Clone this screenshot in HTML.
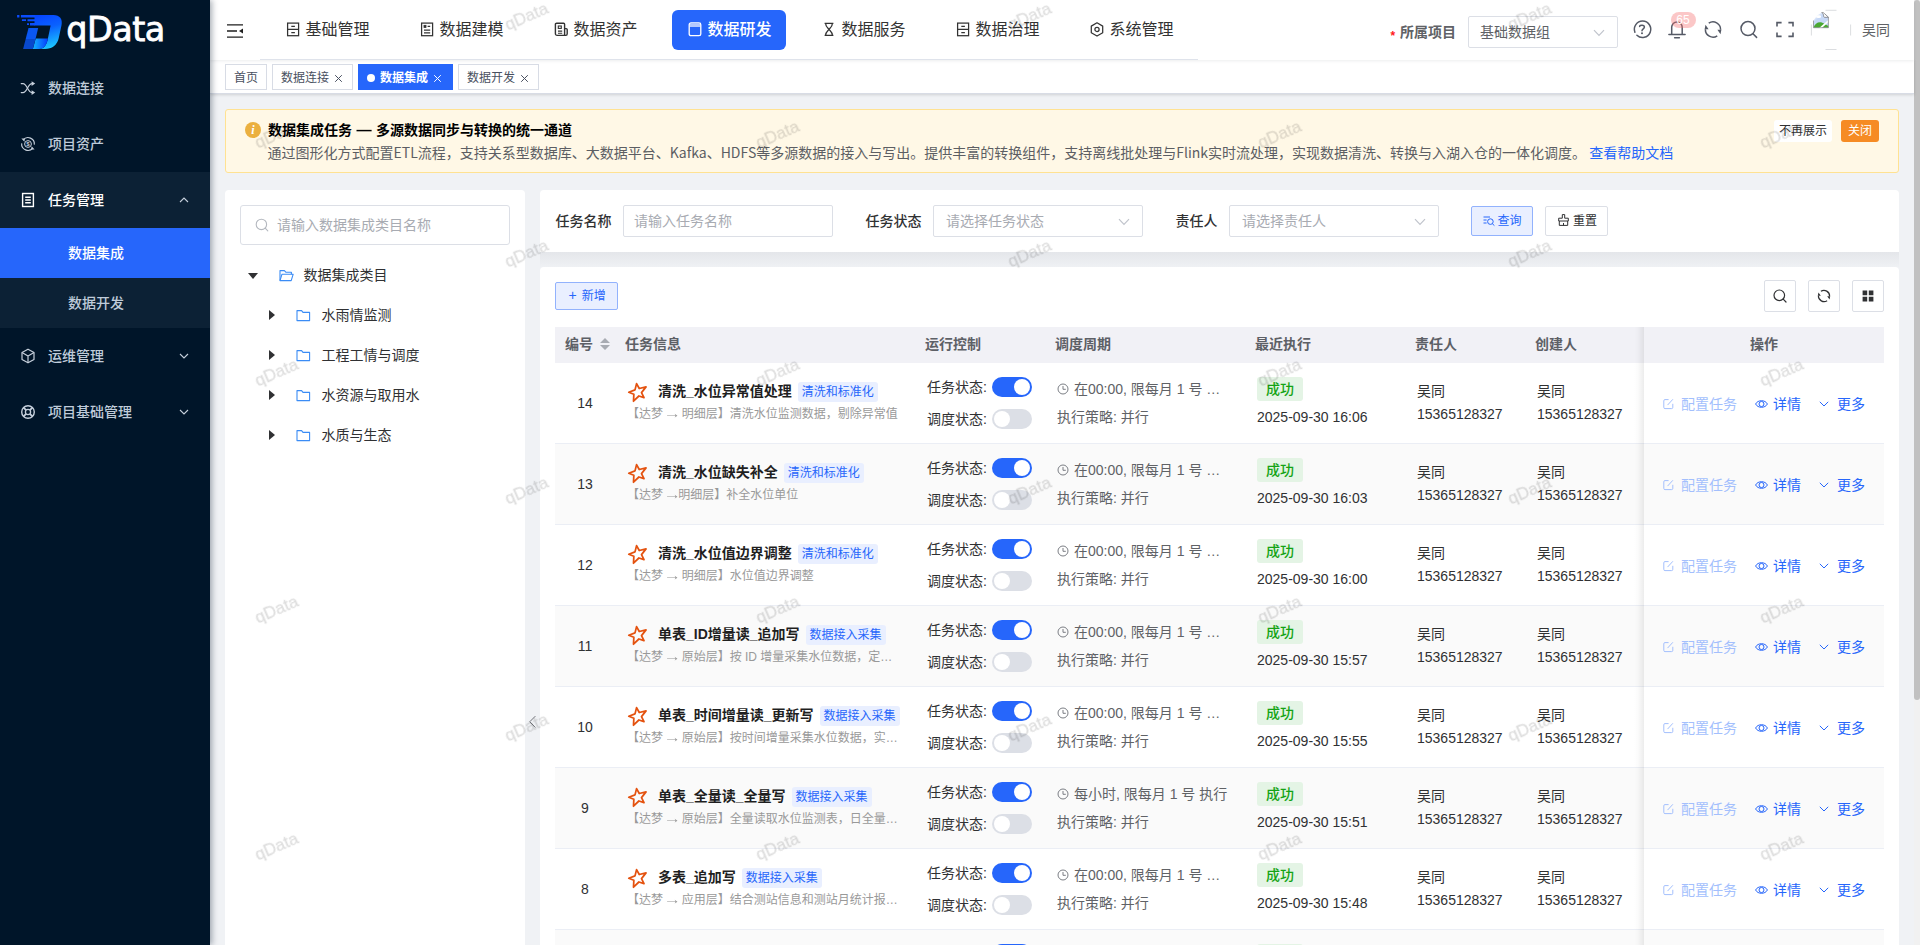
<!DOCTYPE html>
<html lang="zh-CN">
<head>
<meta charset="utf-8">
<title>qData 数据集成</title>
<style>
*{box-sizing:border-box;margin:0;padding:0}
html,body{width:1920px;height:945px;overflow:hidden}
body{font-family:"Liberation Sans","Noto Sans CJK SC",sans-serif;font-size:14px;color:#303133;background:#f0f2f5;position:relative}
svg{display:block;overflow:visible}
.a{position:absolute;white-space:nowrap}
b{font-weight:700}
#sbar{position:absolute;left:1914px;top:0;width:6px;height:945px;background:#f1f1f1}
#sbar i{position:absolute;left:0;top:0;width:6px;height:700px;background:#c1c1c1;border-radius:3px}
/* sidebar */
#side{position:absolute;left:0;top:0;width:210px;height:945px;background:#001529;box-shadow:2px 0 6px rgba(0,21,41,.35);z-index:5}
#logo .t{position:absolute;left:66.3px;top:7.6px;font-family:"DejaVu Sans","Liberation Sans",sans-serif;font-size:33.4px;line-height:44px;color:#fff;letter-spacing:-0.5px;-webkit-text-stroke:.8px #fff}
.mi{position:absolute;left:0;width:210px;height:56px;color:#bfcbd9;font-weight:500;font-size:14px;line-height:56px;padding-left:48px}
.mi svg{position:absolute}
.sub{position:absolute;left:0;width:210px;height:50px;line-height:50px;padding-left:68px;font-weight:500;color:#bfcbd9;background:#0c2135}
.sub.on{background:#2666fb;color:#fff}
/* header */
#top{position:absolute;left:210px;top:0;width:1704px;height:60px;background:#fff;box-shadow:0 1px 3px rgba(0,21,41,.08);z-index:2}
#top .line{position:absolute;left:50px;top:59px;width:938px;height:1px;background:#dfe3eb}
.nv{position:absolute;top:10px;height:40px;line-height:39px;font-size:16px;color:#333;white-space:nowrap}
.nv svg{position:absolute;top:12px}
.nv.on{background:#2666fb;color:#fff;border-radius:6px;width:114px;font-weight:500}
#tags{position:absolute;left:210px;top:60px;z-index:1;width:1704px;height:34px;background:#fff;border-bottom:1px solid #d8dce5;box-shadow:0 1px 3px 0 rgba(0,0,0,.12),0 0 3px 0 rgba(0,0,0,.04)}
.tg{position:absolute;top:4px;height:26px;line-height:27px;border:1px solid #d8dce5;background:#fff;color:#495060;font-size:12px;padding:0 8px;white-space:nowrap}
.tg.on{background:#2666fb;border-color:#2666fb;color:#fff;font-weight:700}
.tg .dot{display:inline-block;width:8px;height:8px;border-radius:50%;background:#fff;margin-right:5px;position:relative;top:0}
.tg svg{display:inline-block;margin-left:5px;vertical-align:-1px}
/* alert */
#alert{position:absolute;left:225px;top:109px;width:1674px;height:64px;background:#fff8e6;border:1px solid #ffe292;border-radius:3px}
/* panels */
.card{position:absolute;background:#fff;border-radius:4px}
.inp{position:absolute;height:32px;border:1px solid #dcdfe6;border-radius:2px;background:#fff;color:#a8abb2;font-size:14px;line-height:30px;padding-left:10px;white-space:nowrap}
.lbl{position:absolute;font-weight:500;color:#303133;font-size:14px;line-height:32px;top:205px;white-space:nowrap}
.btn{position:absolute;border:1px solid #dcdfe6;border-radius:2px;background:#fff;font-size:12px;white-space:nowrap}
.btn.pl{background:#e9efff;border-color:#92b2fd;color:#2666fb}
/* table */
#thead{position:absolute;left:555px;top:327px;width:1329px;height:36px;background:#f1f1f6}
.th{position:absolute;top:0;line-height:35px;font-weight:700;color:#5d6066;font-size:14px;white-space:nowrap}
.row{position:absolute;left:555px;width:1329px;height:81px;border-bottom:1px solid #ebeef5;background:#fff}
.row.s{background:#fafafa}
.row .a{line-height:20px}
.nm{font-weight:700;color:#1f1f1f;font-size:14px}
.tag{display:inline-block;background:#e9efff;color:#2666fb;font-size:12px;font-weight:400;height:20px;line-height:20px;padding:0 4px;border-radius:3px;margin-left:6px;vertical-align:top;position:relative;top:.8px}
.ds{font-size:12px;color:#999;line-height:17px}
.sw{position:absolute;width:40px;height:20px;border-radius:10px;background:#dcdfe6}
.sw i{position:absolute;left:2px;top:2px;width:16px;height:16px;border-radius:50%;background:#fff}
.sw.on{background:#2666fb}.sw.on i{left:22px}
.ok{position:absolute;left:702px;top:14px;width:46px;height:24px;line-height:24px;text-align:center;background:#e4f4e5;color:#14a314;font-weight:500;border-radius:3px;font-size:14px}
.g{color:#606266}
#fix{position:absolute;left:1634px;top:327px;width:10px;height:618px;background:linear-gradient(to right,rgba(0,0,0,0),rgba(0,0,0,.015) 40%,rgba(0,0,0,.075));pointer-events:none}
.op{position:absolute;top:31px;line-height:20px;color:#2666fb;white-space:nowrap}
.op.d{color:#a3bffd}
.op svg{position:absolute;top:4px}
/* watermark */
.wm{position:absolute;font-size:17px;color:#000;opacity:.13;-webkit-text-stroke:.3px #000;filter:blur(.45px);transform:rotate(-23.5deg);transform-origin:center;white-space:nowrap;z-index:9;pointer-events:none;line-height:20px}
</style>
</head>
<body>
<div id="sbar"><i></i></div>
<div id="side">
<div id="logo"><svg width="70" height="60" viewBox="0 0 70 60" style="position:absolute;left:0;top:0">
<defs>
<linearGradient id="g1" x1="0.3" y1="0" x2="0.55" y2="1"><stop offset="0" stop-color="#0646ff"/><stop offset="0.4" stop-color="#0a62ff"/><stop offset="1" stop-color="#1ccaff"/></linearGradient>
<linearGradient id="g2" x1="0" y1="0" x2="1" y2="0"><stop offset="0" stop-color="#12b4ff"/><stop offset="1" stop-color="#063cff"/></linearGradient>
</defs>
<path d="M34.5 14.9H53.5C59.8 14.9 62.8 19 61.5 25.3L58.7 38.2C57.1 45.2 52 48.9 45 48.9H39C44 48.9 46.6 45.5 47.9 38.5L50.6 25.5H34.5Z" fill="url(#g1)"/>
<path d="M35.7 38.5H47.9C46.6 45.5 44 48.9 39 48.9H32.9Z" fill="url(#g2)"/>
<path d="M20.9 14.9H35V17.5H20.9ZM17.1 15.1H19.4V17.4H17.1ZM27.5 19.2H35V21.3H27.5ZM21.9 19.2H26V21H21.9ZM30 23H35V25.5H30ZM27 23.2H29V25H27Z" fill="#0a4dff"/>
<path d="M28.5 28.1H38.2L35.5 39H25.7Z" fill="#0a57f2"/>
<path d="M25.7 39H35.5L32.9 48.9H23.1Z" fill="#0848cc"/>
</svg><div class="t">qData</div></div>
<div class="mi" style="top:60px"><svg width="16" height="16" viewBox="0 0 16 16" style="left:20px;top:19.8px"><g fill="none" stroke="#c6d0dc" stroke-width="1.15" stroke-linecap="round"><path d="M1.2 3.6H3C7.2 3.6 7.6 12.6 12 12.6H13"/><path d="M1.2 12.6H3C7.2 12.6 7.6 3.6 12 3.6H13"/></g><path d="M11.6 1.2L15.2 3.6L11.6 6ZM11.6 10.2L15.2 12.6L11.6 15Z" fill="#c6d0dc"/></svg>数据连接</div>
<div class="mi" style="top:116px"><svg width="16" height="16" viewBox="0 0 16 16" style="left:20px;top:20px"><g fill="none" stroke="#c6d0dc" stroke-width="1.15"><path d="M3.2 3.9A6.3 6.3 0 0 1 14.3 8.6"/><path d="M12.8 12.1A6.3 6.3 0 0 1 1.7 7.4"/><circle cx="8" cy="8" r="3.4" stroke-width="1"/></g><path d="M1.4 2.6L4.9 2.4L4.4 5.8ZM14.6 13.4L11.1 13.6L11.6 10.2Z" fill="#c6d0dc"/><text x="8" y="10.1" font-size="6" text-anchor="middle" fill="#c6d0dc" font-family="Liberation Sans,sans-serif" font-weight="700">$</text></svg>项目资产</div>
<div class="mi" style="top:172px;background:#0c2135;color:#fff"><svg width="16" height="16" viewBox="0 0 16 16" style="left:20px;top:20px"><g fill="none" stroke="#fff" stroke-width="1.4"><rect x="2.6" y="1.5" width="10.8" height="13"/><path d="M5.2 5.2H10.8M5.2 8H10.8M5.2 10.8H10.8"/></g></svg>任务管理<svg width="10" height="6" viewBox="0 0 10 6" style="left:179px;top:25px"><path d="M1 5L5 1L9 5" fill="none" stroke="#c6d0dc" stroke-width="1.1"/></svg></div>
<div class="sub on" style="top:228px">数据集成</div>
<div class="sub" style="top:278px">数据开发</div>
<div class="mi" style="top:328px"><svg width="16" height="16" viewBox="0 0 16 16" style="left:20px;top:20px"><g fill="none" stroke="#c6d0dc" stroke-width="1.2" stroke-linejoin="round"><path d="M8 1.2L14 4.6V11.4L8 14.8L2 11.4V4.6Z"/><path d="M2 4.6L8 8L14 4.6M8 8V14.8"/></g></svg>运维管理<svg width="10" height="6" viewBox="0 0 10 6" style="left:179px;top:25px"><path d="M1 1L5 5L9 1" fill="none" stroke="#c6d0dc" stroke-width="1.1"/></svg></div>
<div class="mi" style="top:384px"><svg width="16" height="16" viewBox="0 0 16 16" style="left:20px;top:20px"><g fill="none" stroke="#c6d0dc"><circle cx="8" cy="8" r="6.3" stroke-width="1.4"/><circle cx="8" cy="8" r="2.6" stroke-width="1.3"/><path d="M3.6 3.6L6.1 6.1M12.4 3.6L9.9 6.1M3.6 12.4L6.1 9.9M12.4 12.4L9.9 9.9" stroke-width="1.8"/></g></svg>项目基础管理<svg width="10" height="6" viewBox="0 0 10 6" style="left:179px;top:25px"><path d="M1 1L5 5L9 1" fill="none" stroke="#c6d0dc" stroke-width="1.1"/></svg></div>
</div>
<div id="top">
<div class="line"></div>
<svg width="18" height="16" viewBox="0 0 18 16" style="position:absolute;left:16px;top:23px"><g fill="none" stroke="#1f1f1f" stroke-width="1.4"><path d="M1 1.9H17M1 8H11M1 14.1H17"/></g><path d="M17 5.6V10.4L13 8Z" fill="#1f1f1f"/></svg><div class="nv" style="left:76.0px;width:90px"><svg width="14" height="15" viewBox="0 0 14 15" style="left:0"><g fill="none" stroke="#333" stroke-width="1.25"><rect x="1.6" y="1.1" width="11" height="12.6"/><path d="M1.6 7.4H12.6M5.3 4.3H8.9M5.3 10.6H8.9"/></g></svg><span style="position:absolute;left:19.6px">基础管理</span></div>
<div class="nv" style="left:210.0px;width:90px"><svg width="14" height="15" viewBox="0 0 14 15" style="left:0"><g fill="none" stroke="#333" stroke-width="1.25"><rect x="1.6" y="1.1" width="11" height="12.6"/><path d="M4 8.1H10.2M4 10.8H10.2M7.6 4.4H10.2"/><rect x="4" y="3.3" width="2" height="2.2" fill="#333" stroke-width="0.8"/></g></svg><span style="position:absolute;left:19.6px">数据建模</span></div>
<div class="nv" style="left:344.0px;width:90px"><svg width="14" height="15" viewBox="0 0 14 15" style="left:0"><g fill="none" stroke="#333" stroke-width="1.4" stroke-linejoin="round"><path d="M2.6 1.2H9.6Q10.6 1.2 10.6 2.2V13.4H3.2C2 13.4 1.4 12.6 1.4 11.6V2.2Q1.4 1.2 2.6 1.2Z"/><path d="M10.6 6.6H12.2Q13.2 6.6 13.2 7.6V11.8C13.2 12.8 12.5 13.4 11.9 13.4H10"/></g><g fill="none" stroke="#333" stroke-width="1.25"><path d="M4 9.1H8.2M4 11.2H8.2" stroke-width="1.1"/><rect x="4.3" y="4" width="3" height="2.4" stroke-width="1.1"/></g></svg><span style="position:absolute;left:19.6px">数据资产</span></div>
<div class="nv on" style="left:462px"><svg width="14" height="15" viewBox="0 0 14 15" style="left:16px"><rect x="1.2" y="0.9" width="11.6" height="12.8" rx="1.8" fill="none" stroke="#fff" stroke-width="1.3"/><path d="M1.6 1.6H12.4V5H1.6Z" fill="#fff" opacity=".65"/></svg><span style="position:absolute;left:35.6px">数据研发</span></div>
<div class="nv" style="left:612.0px;width:90px"><svg width="14" height="15" viewBox="0 0 14 15" style="left:0"><g fill="none" stroke="#333" stroke-width="1.25" stroke-linejoin="round"><path d="M2.6 1.4H11.4M2.6 13.4H11.4M3.6 1.6C3.6 4.6 6 6 7 7.4C8 6 10.4 4.6 10.4 1.6M3.6 13.2C3.6 10.2 6 8.8 7 7.4C8 8.8 10.4 10.2 10.4 13.2"/></g></svg><span style="position:absolute;left:19.6px">数据服务</span></div>
<div class="nv" style="left:746.0px;width:90px"><svg width="14" height="15" viewBox="0 0 14 15" style="left:0"><g fill="none" stroke="#333" stroke-width="1.25"><rect x="1.6" y="1.1" width="11" height="12.6"/><path d="M1.6 7.4H12.6M5.3 4.3H8.9M5.3 10.6H8.9"/></g></svg><span style="position:absolute;left:19.6px">数据治理</span></div>
<div class="nv" style="left:880.0px;width:90px"><svg width="14" height="15" viewBox="0 0 14 15" style="left:0"><g fill="none" stroke="#333" stroke-width="1.25" stroke-linejoin="round"><path d="M7 0.8L12.7 4.1V10.7L7 14L1.3 10.7V4.1Z"/><circle cx="7" cy="7.4" r="2.1"/></g></svg><span style="position:absolute;left:19.6px">系统管理</span></div>
<div class="a" style="left:1180.6px;top:25.5px;line-height:20px;color:#ff1a1a;font-size:12px;font-weight:700">*</div><div class="a" style="left:1190px;top:22px;line-height:20px;font-weight:700;color:#606266">所属项目</div><div class="inp" style="left:1258px;top:16px;width:150px;color:#606266;padding-left:11px">基础数据组<svg width="12" height="8" viewBox="0 0 12 8" style="position:absolute;left:124px;top:12px"><path d="M1 1.2L6 6.4L11 1.2" fill="none" stroke="#c0c4cc" stroke-width="1.2"/></svg></div>
<svg width="20" height="20" viewBox="0 0 20 20" style="position:absolute;left:1421.6px;top:18.8px"><g fill="none" stroke="#555a66" stroke-width="1.5" stroke-linecap="round"><path d="M4.9 16.2A8.2 8.2 0 1 0 2.9 13.2"/><path d="M7.6 7.6C7.6 5.6 12.4 5.6 12.4 8C12.4 9.8 10 9.8 10 11.8"/></g><circle cx="10" cy="14.3" r="1" fill="#555a66"/></svg><svg width="20" height="20" viewBox="0 0 20 20" style="position:absolute;left:1457px;top:20px"><g fill="none" stroke="#555a66" stroke-width="1.5" stroke-linecap="round"><path d="M1.9 14.6H18.1M4.7 14.4V7.3A5.25 5.25 0 0 1 15.2 7.3V14.4M7.6 17.8H12.4"/></g></svg><div class="a" style="left:1460.5px;top:12px;width:25px;height:16px;border-radius:8px;background:rgba(245,108,108,.38);color:#fff;font-size:12px;line-height:16px;text-align:center">65</div><svg width="20" height="20" viewBox="0 0 20 20" style="position:absolute;left:1493px;top:19px"><g fill="none" stroke="#555a66" stroke-width="1.5"><path d="M5.75 4.20A7.6 7.6 0 0 1 17.60 10.77"/><path d="M14.25 16.80A7.6 7.6 0 0 1 2.40 10.23"/></g><path d="M14.40 10.70H18.40L17.50 15.30ZM1.60 10.30H5.60L2.50 5.70Z" fill="#555a66"/></svg><svg width="20" height="20" viewBox="0 0 20 20" style="position:absolute;left:1529px;top:20px"><g fill="none" stroke="#555a66" stroke-width="1.5" stroke-linecap="round"><circle cx="9" cy="8.6" r="7"/><path d="M14 13.8L17.6 17.4"/></g></svg><svg width="20" height="20" viewBox="0 0 20 20" style="position:absolute;left:1565px;top:20px"><g fill="none" stroke="#555a66" stroke-width="1.6"><path d="M2 6.4V2.6H6.6M13.4 2.6H18V6.4M18 12.6V16.4H13.4M6.6 16.4H2V12.6"/></g></svg><svg width="42" height="42" viewBox="0 0 42 42" style="position:absolute;left:1600px;top:9px"><g fill="none" stroke="#d2d4d8" stroke-width=".8"><path d="M15.5 1.3H26.5M15.5 40.5H26.5M1.4 15.5V26.5M40.6 15.5V26.5"/></g></svg><svg width="17" height="17" viewBox="0 0 17 17" style="position:absolute;left:1603px;top:11.6px"><defs><linearGradient id="bk" x1="0" y1="0" x2="0.6" y2="0.7"><stop offset="0.15" stop-color="#fff"/><stop offset="0.55" stop-color="#c6d8f6"/></linearGradient></defs><path d="M0.5 8.4L4.2 3.6L8.8 0.6L15.4 5.2V15.7H0.5Z" fill="url(#bk)"/><ellipse cx="5.6" cy="4.7" rx="2.6" ry="1.4" fill="#fff"/><path d="M0.5 15.7C1.6 11.4 5.4 9.4 8.8 10.4C11 11.1 13 12.6 15.4 14V15.7Z" fill="#4aa832"/><path d="M6.2 16L8.8 16L15.8 9.7V7.5Z" fill="#fff"/><path d="M0.5 8.6V15.7H15.4V5.2" fill="none" stroke="#8d8f93" stroke-width=".8"/><path d="M8.8 0.5C10.2 0.4 10.8 0.9 11.6 1.7L15.5 5.3H11.6C10.8 5.3 10.6 4.6 10.6 3.8C10.6 2.6 10 1.6 8.8 0.5Z" fill="#fff" stroke="#77797d" stroke-width=".8" stroke-linejoin="round"/></svg><div class="a" style="left:1652px;top:20.4px;line-height:20px;color:#606266">吴同</div></div>
<div id="tags">
<div class="tg" style="left:15px;width:42px">首页</div><div class="tg" style="left:62px;width:81px">数据连接<svg width="9" height="9" viewBox="0 0 9 9"><path d="M1.2 1.2L7.8 7.8M7.8 1.2L1.2 7.8" fill="none" stroke="currentColor" stroke-width="1"/></svg></div><div class="tg on" style="left:148px;width:95px"><i class="dot"></i>数据集成<svg width="9" height="9" viewBox="0 0 9 9"><path d="M1.2 1.2L7.8 7.8M7.8 1.2L1.2 7.8" fill="none" stroke="currentColor" stroke-width="1"/></svg></div><div class="tg" style="left:248px;width:81px">数据开发<svg width="9" height="9" viewBox="0 0 9 9"><path d="M1.2 1.2L7.8 7.8M7.8 1.2L1.2 7.8" fill="none" stroke="currentColor" stroke-width="1"/></svg></div>
</div>
<div id="alert"><div class="a" style="left:19px;top:12px;width:16px;height:16px;border-radius:50%;background:#ebb03f;color:#fff;font:italic 700 12px/16px 'Liberation Serif',serif;text-align:center">i</div><div class="a" style="left:42px;top:10px;line-height:20px;font-weight:700;color:#000">数据集成任务 <span style="display:inline-block;transform:scaleX(1.08);margin:0 1.1px">—</span> 多源数据同步与转换的统一通道</div><div class="a" id="adesc" style="left:41.5px;top:32px;line-height:20px;color:#5c5e63;font-family:'Noto Sans CJK SC',sans-serif">通过图形化方式配置ETL流程，支持关系型数据库、大数据平台、Kafka、HDFS等多源数据的接入与写出。提供丰富的转换组件，支持离线批处理与Flink实时流处理，实现数据清洗、转换与入湖入仓的一体化调度。 <span style="color:#2666fb">查看帮助文档</span></div><div class="a" style="left:1548px;top:10px;width:58px;height:22px;line-height:23px;background:#fff;border-radius:3px;font-size:12px;text-align:center;color:#303133">不再展示</div><div class="a" style="left:1615px;top:10px;width:38px;height:22px;line-height:23px;background:#f68b24;border-radius:3px;font-size:12px;text-align:center;color:#fff">关闭</div></div>
<div class="card" style="left:225px;top:190px;width:300px;height:760px"><div class="inp" style="left:15px;top:15px;width:270px;height:40px;line-height:38px;padding-left:36px;border-radius:3px">请输入数据集成类目名称<svg width="14" height="14" viewBox="0 0 14 14" style="position:absolute;left:14px;top:12px"><g fill="none" stroke="#b4b8bf" stroke-width="1.1" stroke-linecap="round"><circle cx="6.4" cy="6.4" r="5.2"/><path d="M10.2 10.2L12.8 12.8"/></g></svg></div><div class="a" style="left:23px;top:82.8px"><svg width="10" height="6" viewBox="0 0 10 6"><path d="M0 0H10L5 6Z" fill="#303133"/></svg></div><div class="a" style="left:53.5px;top:78.8px"><svg width="15" height="13" viewBox="0 0 15 13"><g fill="none" stroke="#3b8cf5" stroke-width="1.1" stroke-linejoin="round"><path d="M1 11.6V1.6H5.4L6.8 3.2H12.4V5.2"/><path d="M1 11.6L3 5.2H14.2L12.2 11.6Z"/></g></svg></div><div class="a" style="left:78.5px;top:75px;line-height:20px">数据集成类目</div><div class="a" style="left:44px;top:120px"><svg width="6" height="10" viewBox="0 0 6 10"><path d="M0 0V10L6 5Z" fill="#303133"/></svg></div><div class="a" style="left:71.3px;top:118.8px"><svg width="15" height="13" viewBox="0 0 15 13"><g fill="none" stroke="#3b8cf5" stroke-width="1.1" stroke-linejoin="round"><path d="M1 1.6H5.6L7 3.4H13.6V11.6H1Z"/></g></svg></div><div class="a" style="left:96.5px;top:115px;line-height:20px">水雨情监测</div><div class="a" style="left:44px;top:160px"><svg width="6" height="10" viewBox="0 0 6 10"><path d="M0 0V10L6 5Z" fill="#303133"/></svg></div><div class="a" style="left:71.3px;top:158.8px"><svg width="15" height="13" viewBox="0 0 15 13"><g fill="none" stroke="#3b8cf5" stroke-width="1.1" stroke-linejoin="round"><path d="M1 1.6H5.6L7 3.4H13.6V11.6H1Z"/></g></svg></div><div class="a" style="left:96.5px;top:155px;line-height:20px">工程工情与调度</div><div class="a" style="left:44px;top:200px"><svg width="6" height="10" viewBox="0 0 6 10"><path d="M0 0V10L6 5Z" fill="#303133"/></svg></div><div class="a" style="left:71.3px;top:198.8px"><svg width="15" height="13" viewBox="0 0 15 13"><g fill="none" stroke="#3b8cf5" stroke-width="1.1" stroke-linejoin="round"><path d="M1 1.6H5.6L7 3.4H13.6V11.6H1Z"/></g></svg></div><div class="a" style="left:96.5px;top:195px;line-height:20px">水资源与取用水</div><div class="a" style="left:44px;top:240px"><svg width="6" height="10" viewBox="0 0 6 10"><path d="M0 0V10L6 5Z" fill="#303133"/></svg></div><div class="a" style="left:71.3px;top:238.8px"><svg width="15" height="13" viewBox="0 0 15 13"><g fill="none" stroke="#3b8cf5" stroke-width="1.1" stroke-linejoin="round"><path d="M1 1.6H5.6L7 3.4H13.6V11.6H1Z"/></g></svg></div><div class="a" style="left:96.5px;top:235px;line-height:20px">水质与生态</div></div>
<svg width="8" height="14" viewBox="0 0 8 14" style="position:absolute;left:528.5px;top:715px"><path d="M6.4 1.1L0.7 6.8L6.4 12.5" fill="none" stroke="#707379" stroke-width="1"/></svg><div class="a" style="left:540px;top:252px;width:1359px;height:15px;background:linear-gradient(#e4e6ea,#eff1f4)"></div><div class="card" style="left:540px;top:190px;width:1359px;height:62px;border-radius:4px 4px 0 0"></div><div class="lbl" style="left:555.5px">任务名称</div><div class="inp" style="left:623px;top:205px;width:210px">请输入任务名称</div><div class="lbl" style="left:865.5px">任务状态</div><div class="inp" style="left:933px;top:205px;width:210px;padding-left:12px">请选择任务状态<svg width="12" height="8" viewBox="0 0 12 8" style="position:absolute;left:184px;top:12px"><path d="M1 1.2L6 6.4L11 1.2" fill="none" stroke="#c0c4cc" stroke-width="1.2"/></svg></div><div class="lbl" style="left:1175.5px">责任人</div><div class="inp" style="left:1229px;top:205px;width:210px;padding-left:12px">请选择责任人<svg width="12" height="8" viewBox="0 0 12 8" style="position:absolute;left:184px;top:12px"><path d="M1 1.2L6 6.4L11 1.2" fill="none" stroke="#c0c4cc" stroke-width="1.2"/></svg></div><div class="btn pl" style="left:1471px;top:206px;width:62px;height:30px;line-height:29.5px;padding-left:25.5px"><svg width="12" height="10" viewBox="0 0 12 10" style="position:absolute;left:11px;top:9px"><g fill="none" stroke="#2666fb" stroke-width="1"><path d="M0.5 1H7M0.5 4H3.6M0.5 7H3.6"/><circle cx="7.4" cy="5.6" r="2.8"/><path d="M9.4 7.8L11.4 9.6"/></g></svg>查询</div><div class="btn" style="left:1545px;top:206px;width:63px;height:30px;line-height:29.5px;padding-left:27px;color:#303133"><svg width="13" height="13" viewBox="0 0 13 13" style="position:absolute;left:11px;top:7px"><g fill="none" stroke="#303133" stroke-width="1"><path d="M5.3 0.6H7.7V4.2H11.3V7H1.7V4.2H5.3Z"/><path d="M2.3 7V11.4H10.7V7M6.5 9V11.4"/></g></svg>重置</div>
<div class="card" style="left:540px;top:267px;width:1359px;height:700px;border-radius:4px 4px 0 0"></div><div class="btn pl" style="left:555px;top:282px;width:63px;height:28px;line-height:26px;padding-left:25.8px"><span style="position:absolute;left:12.6px;top:-.6px;font-size:14px">+</span>新增</div><div class="btn" style="left:1764px;top:280px;width:32px;height:32px"><svg width="14" height="14" viewBox="0 0 14 14" style="position:absolute;left:8px;top:8px"><g fill="none" stroke="#303133" stroke-width="1.2" stroke-linecap="round"><circle cx="6.3" cy="6.3" r="5.3"/><path d="M10.2 10.2L13 13"/></g></svg></div><div class="btn" style="left:1808px;top:280px;width:32px;height:32px"><svg width="14" height="14" viewBox="0 0 14 14" style="position:absolute;left:8px;top:8px"><g fill="none" stroke="#303133" stroke-width="1.2"><path d="M3.87 2.36A5.6 5.6 0 0 1 12.60 7.20"/><path d="M10.13 11.64A5.6 5.6 0 0 1 1.40 6.80"/></g><path d="M10.20 7.20H13.20L12.52 10.60ZM0.80 6.80H3.80L1.48 3.40Z" fill="#303133"/></svg></div><div class="btn" style="left:1852px;top:280px;width:32px;height:32px"><svg width="12" height="12" viewBox="0 0 12 12" style="position:absolute;left:9px;top:9px"><path d="M0.6 0.6H5.2V5.2H0.6ZM6.8 0.6H11.4V5.2H6.8ZM0.6 6.8H5.2V11.4H0.6ZM6.8 6.8H11.4V11.4H6.8Z" fill="#303133"/></svg></div>
<div id="thead"><div class="th" style="left:10px">编号</div><div class="th" style="left:70px">任务信息</div><div class="th" style="left:370px">运行控制</div><div class="th" style="left:500px">调度周期</div><div class="th" style="left:700px">最近执行</div><div class="th" style="left:860px">责任人</div><div class="th" style="left:980px">创建人</div><div class="th" style="left:1195px">操作</div><svg width="10" height="12" viewBox="0 0 10 12" style="position:absolute;left:45px;top:11px"><path d="M5 0L10 5H0Z M5 12L10 7H0Z" fill="#a8abb2"/></svg></div>
<div class="row" style="top:363px"><div class="a" style="left:0;top:30px;width:60px;text-align:center">14</div><div class="a" style="left:73px;top:19px"><svg width="20" height="21" viewBox="0 0 20 21"><path d="M8.56 1.6L11.27 6.5L18.04 4.84L13.5 10.6L16 15.67L10.9 14L5.5 19.2L5.85 12.3L0.77 10.25L7 7.9Z" fill="none" stroke="#e4520f" stroke-width="1.75" stroke-linejoin="round"/></svg></div><div class="a nm" style="left:103px;top:18px">清洗_水位异常值处理<span class="tag">清洗和标准化</span></div><div class="a ds" style="left:72px;top:41.2px">【达梦 <span style="font-family:'WenQuanYi Zen Hei',sans-serif;position:relative;top:1.6px">→</span> 明细层】清洗水位监测数据，剔除异常值</div><div class="a" style="left:372px;top:14px">任务状态:</div><div class="sw on" style="left:437px;top:14px"><i></i></div><div class="a" style="left:372px;top:46px">调度状态:</div><div class="sw" style="left:437px;top:46px"><i></i></div><div class="a" style="left:502px;top:20px"><svg width="12" height="12" viewBox="0 0 12 12"><g fill="none" stroke="#74777d" stroke-width=".95"><circle cx="6" cy="6" r="5"/><path d="M6 3V6.3H8.8"/></g></svg></div><div class="a g" style="left:519px;top:16px">在00:00, 限每月 1 号 …</div><div class="a g" style="left:502px;top:44px">执行策略: 并行</div><div class="ok">成功</div><div class="a" style="left:702px;top:44px">2025-09-30 16:06</div><div class="a" style="left:862px;top:17.5px">吴同</div><div class="a" style="left:862px;top:41px">15365128327</div><div class="a" style="left:982px;top:17.5px">吴同</div><div class="a" style="left:982px;top:41px">15365128327</div><div class="op d" style="left:1108.5px;padding-left:17.5px"><svg width="12" height="12" viewBox="0 0 12 12" style="left:-0.4px"><g fill="none" stroke="#a3bffd" stroke-width="1" stroke-linejoin="round" stroke-linecap="round"><path d="M9.8 6.2V9.4Q9.8 10.6 8.6 10.6H2Q0.8 10.6 0.8 9.4V2.8Q0.8 1.6 2 1.6H5.2"/><path d="M4.8 6.8L9.6 1.6"/></g></svg>配置任务</div><div class="op" style="left:1200px;padding-left:18px"><svg width="13" height="10" viewBox="0 0 13 10" style="left:0;top:5px"><g fill="none" stroke="#2666fb" stroke-width="1"><path d="M0.6 5C2.8 0.6 10.2 0.6 12.4 5C10.2 9.4 2.8 9.4 0.6 5Z"/><circle cx="6.5" cy="5" r="2.5"/></g></svg>详情</div><div class="op" style="left:1264.4px;padding-left:17.5px"><svg width="10" height="6" viewBox="0 0 10 6" style="left:0;top:7px"><path d="M0.8 0.8L5 5L9.2 0.8" fill="none" stroke="#2666fb" stroke-width="1"/></svg>更多</div></div>
<div class="row s" style="top:444px"><div class="a" style="left:0;top:30px;width:60px;text-align:center">13</div><div class="a" style="left:73px;top:19px"><svg width="20" height="21" viewBox="0 0 20 21"><path d="M8.56 1.6L11.27 6.5L18.04 4.84L13.5 10.6L16 15.67L10.9 14L5.5 19.2L5.85 12.3L0.77 10.25L7 7.9Z" fill="none" stroke="#e4520f" stroke-width="1.75" stroke-linejoin="round"/></svg></div><div class="a nm" style="left:103px;top:18px">清洗_水位缺失补全<span class="tag">清洗和标准化</span></div><div class="a ds" style="left:72px;top:41.2px">【达梦 <span style="font-family:'WenQuanYi Zen Hei',sans-serif;position:relative;top:1.6px">→</span>明细层】补全水位单位</div><div class="a" style="left:372px;top:14px">任务状态:</div><div class="sw on" style="left:437px;top:14px"><i></i></div><div class="a" style="left:372px;top:46px">调度状态:</div><div class="sw" style="left:437px;top:46px"><i></i></div><div class="a" style="left:502px;top:20px"><svg width="12" height="12" viewBox="0 0 12 12"><g fill="none" stroke="#74777d" stroke-width=".95"><circle cx="6" cy="6" r="5"/><path d="M6 3V6.3H8.8"/></g></svg></div><div class="a g" style="left:519px;top:16px">在00:00, 限每月 1 号 …</div><div class="a g" style="left:502px;top:44px">执行策略: 并行</div><div class="ok">成功</div><div class="a" style="left:702px;top:44px">2025-09-30 16:03</div><div class="a" style="left:862px;top:17.5px">吴同</div><div class="a" style="left:862px;top:41px">15365128327</div><div class="a" style="left:982px;top:17.5px">吴同</div><div class="a" style="left:982px;top:41px">15365128327</div><div class="op d" style="left:1108.5px;padding-left:17.5px"><svg width="12" height="12" viewBox="0 0 12 12" style="left:-0.4px"><g fill="none" stroke="#a3bffd" stroke-width="1" stroke-linejoin="round" stroke-linecap="round"><path d="M9.8 6.2V9.4Q9.8 10.6 8.6 10.6H2Q0.8 10.6 0.8 9.4V2.8Q0.8 1.6 2 1.6H5.2"/><path d="M4.8 6.8L9.6 1.6"/></g></svg>配置任务</div><div class="op" style="left:1200px;padding-left:18px"><svg width="13" height="10" viewBox="0 0 13 10" style="left:0;top:5px"><g fill="none" stroke="#2666fb" stroke-width="1"><path d="M0.6 5C2.8 0.6 10.2 0.6 12.4 5C10.2 9.4 2.8 9.4 0.6 5Z"/><circle cx="6.5" cy="5" r="2.5"/></g></svg>详情</div><div class="op" style="left:1264.4px;padding-left:17.5px"><svg width="10" height="6" viewBox="0 0 10 6" style="left:0;top:7px"><path d="M0.8 0.8L5 5L9.2 0.8" fill="none" stroke="#2666fb" stroke-width="1"/></svg>更多</div></div>
<div class="row" style="top:525px"><div class="a" style="left:0;top:30px;width:60px;text-align:center">12</div><div class="a" style="left:73px;top:19px"><svg width="20" height="21" viewBox="0 0 20 21"><path d="M8.56 1.6L11.27 6.5L18.04 4.84L13.5 10.6L16 15.67L10.9 14L5.5 19.2L5.85 12.3L0.77 10.25L7 7.9Z" fill="none" stroke="#e4520f" stroke-width="1.75" stroke-linejoin="round"/></svg></div><div class="a nm" style="left:103px;top:18px">清洗_水位值边界调整<span class="tag">清洗和标准化</span></div><div class="a ds" style="left:72px;top:41.2px">【达梦 <span style="font-family:'WenQuanYi Zen Hei',sans-serif;position:relative;top:1.6px">→</span> 明细层】水位值边界调整</div><div class="a" style="left:372px;top:14px">任务状态:</div><div class="sw on" style="left:437px;top:14px"><i></i></div><div class="a" style="left:372px;top:46px">调度状态:</div><div class="sw" style="left:437px;top:46px"><i></i></div><div class="a" style="left:502px;top:20px"><svg width="12" height="12" viewBox="0 0 12 12"><g fill="none" stroke="#74777d" stroke-width=".95"><circle cx="6" cy="6" r="5"/><path d="M6 3V6.3H8.8"/></g></svg></div><div class="a g" style="left:519px;top:16px">在00:00, 限每月 1 号 …</div><div class="a g" style="left:502px;top:44px">执行策略: 并行</div><div class="ok">成功</div><div class="a" style="left:702px;top:44px">2025-09-30 16:00</div><div class="a" style="left:862px;top:17.5px">吴同</div><div class="a" style="left:862px;top:41px">15365128327</div><div class="a" style="left:982px;top:17.5px">吴同</div><div class="a" style="left:982px;top:41px">15365128327</div><div class="op d" style="left:1108.5px;padding-left:17.5px"><svg width="12" height="12" viewBox="0 0 12 12" style="left:-0.4px"><g fill="none" stroke="#a3bffd" stroke-width="1" stroke-linejoin="round" stroke-linecap="round"><path d="M9.8 6.2V9.4Q9.8 10.6 8.6 10.6H2Q0.8 10.6 0.8 9.4V2.8Q0.8 1.6 2 1.6H5.2"/><path d="M4.8 6.8L9.6 1.6"/></g></svg>配置任务</div><div class="op" style="left:1200px;padding-left:18px"><svg width="13" height="10" viewBox="0 0 13 10" style="left:0;top:5px"><g fill="none" stroke="#2666fb" stroke-width="1"><path d="M0.6 5C2.8 0.6 10.2 0.6 12.4 5C10.2 9.4 2.8 9.4 0.6 5Z"/><circle cx="6.5" cy="5" r="2.5"/></g></svg>详情</div><div class="op" style="left:1264.4px;padding-left:17.5px"><svg width="10" height="6" viewBox="0 0 10 6" style="left:0;top:7px"><path d="M0.8 0.8L5 5L9.2 0.8" fill="none" stroke="#2666fb" stroke-width="1"/></svg>更多</div></div>
<div class="row s" style="top:606px"><div class="a" style="left:0;top:30px;width:60px;text-align:center">11</div><div class="a" style="left:73px;top:19px"><svg width="20" height="21" viewBox="0 0 20 21"><path d="M8.56 1.6L11.27 6.5L18.04 4.84L13.5 10.6L16 15.67L10.9 14L5.5 19.2L5.85 12.3L0.77 10.25L7 7.9Z" fill="none" stroke="#e4520f" stroke-width="1.75" stroke-linejoin="round"/></svg></div><div class="a nm" style="left:103px;top:18px">单表_ID增量读_追加写<span class="tag">数据接入采集</span></div><div class="a ds" style="left:72px;top:41.2px">【达梦 <span style="font-family:'WenQuanYi Zen Hei',sans-serif;position:relative;top:1.6px">→</span> 原始层】按 ID 增量采集水位数据，定…</div><div class="a" style="left:372px;top:14px">任务状态:</div><div class="sw on" style="left:437px;top:14px"><i></i></div><div class="a" style="left:372px;top:46px">调度状态:</div><div class="sw" style="left:437px;top:46px"><i></i></div><div class="a" style="left:502px;top:20px"><svg width="12" height="12" viewBox="0 0 12 12"><g fill="none" stroke="#74777d" stroke-width=".95"><circle cx="6" cy="6" r="5"/><path d="M6 3V6.3H8.8"/></g></svg></div><div class="a g" style="left:519px;top:16px">在00:00, 限每月 1 号 …</div><div class="a g" style="left:502px;top:44px">执行策略: 并行</div><div class="ok">成功</div><div class="a" style="left:702px;top:44px">2025-09-30 15:57</div><div class="a" style="left:862px;top:17.5px">吴同</div><div class="a" style="left:862px;top:41px">15365128327</div><div class="a" style="left:982px;top:17.5px">吴同</div><div class="a" style="left:982px;top:41px">15365128327</div><div class="op d" style="left:1108.5px;padding-left:17.5px"><svg width="12" height="12" viewBox="0 0 12 12" style="left:-0.4px"><g fill="none" stroke="#a3bffd" stroke-width="1" stroke-linejoin="round" stroke-linecap="round"><path d="M9.8 6.2V9.4Q9.8 10.6 8.6 10.6H2Q0.8 10.6 0.8 9.4V2.8Q0.8 1.6 2 1.6H5.2"/><path d="M4.8 6.8L9.6 1.6"/></g></svg>配置任务</div><div class="op" style="left:1200px;padding-left:18px"><svg width="13" height="10" viewBox="0 0 13 10" style="left:0;top:5px"><g fill="none" stroke="#2666fb" stroke-width="1"><path d="M0.6 5C2.8 0.6 10.2 0.6 12.4 5C10.2 9.4 2.8 9.4 0.6 5Z"/><circle cx="6.5" cy="5" r="2.5"/></g></svg>详情</div><div class="op" style="left:1264.4px;padding-left:17.5px"><svg width="10" height="6" viewBox="0 0 10 6" style="left:0;top:7px"><path d="M0.8 0.8L5 5L9.2 0.8" fill="none" stroke="#2666fb" stroke-width="1"/></svg>更多</div></div>
<div class="row" style="top:687px"><div class="a" style="left:0;top:30px;width:60px;text-align:center">10</div><div class="a" style="left:73px;top:19px"><svg width="20" height="21" viewBox="0 0 20 21"><path d="M8.56 1.6L11.27 6.5L18.04 4.84L13.5 10.6L16 15.67L10.9 14L5.5 19.2L5.85 12.3L0.77 10.25L7 7.9Z" fill="none" stroke="#e4520f" stroke-width="1.75" stroke-linejoin="round"/></svg></div><div class="a nm" style="left:103px;top:18px">单表_时间增量读_更新写<span class="tag">数据接入采集</span></div><div class="a ds" style="left:72px;top:41.2px">【达梦 <span style="font-family:'WenQuanYi Zen Hei',sans-serif;position:relative;top:1.6px">→</span> 原始层】按时间增量采集水位数据，实…</div><div class="a" style="left:372px;top:14px">任务状态:</div><div class="sw on" style="left:437px;top:14px"><i></i></div><div class="a" style="left:372px;top:46px">调度状态:</div><div class="sw" style="left:437px;top:46px"><i></i></div><div class="a" style="left:502px;top:20px"><svg width="12" height="12" viewBox="0 0 12 12"><g fill="none" stroke="#74777d" stroke-width=".95"><circle cx="6" cy="6" r="5"/><path d="M6 3V6.3H8.8"/></g></svg></div><div class="a g" style="left:519px;top:16px">在00:00, 限每月 1 号 …</div><div class="a g" style="left:502px;top:44px">执行策略: 并行</div><div class="ok">成功</div><div class="a" style="left:702px;top:44px">2025-09-30 15:55</div><div class="a" style="left:862px;top:17.5px">吴同</div><div class="a" style="left:862px;top:41px">15365128327</div><div class="a" style="left:982px;top:17.5px">吴同</div><div class="a" style="left:982px;top:41px">15365128327</div><div class="op d" style="left:1108.5px;padding-left:17.5px"><svg width="12" height="12" viewBox="0 0 12 12" style="left:-0.4px"><g fill="none" stroke="#a3bffd" stroke-width="1" stroke-linejoin="round" stroke-linecap="round"><path d="M9.8 6.2V9.4Q9.8 10.6 8.6 10.6H2Q0.8 10.6 0.8 9.4V2.8Q0.8 1.6 2 1.6H5.2"/><path d="M4.8 6.8L9.6 1.6"/></g></svg>配置任务</div><div class="op" style="left:1200px;padding-left:18px"><svg width="13" height="10" viewBox="0 0 13 10" style="left:0;top:5px"><g fill="none" stroke="#2666fb" stroke-width="1"><path d="M0.6 5C2.8 0.6 10.2 0.6 12.4 5C10.2 9.4 2.8 9.4 0.6 5Z"/><circle cx="6.5" cy="5" r="2.5"/></g></svg>详情</div><div class="op" style="left:1264.4px;padding-left:17.5px"><svg width="10" height="6" viewBox="0 0 10 6" style="left:0;top:7px"><path d="M0.8 0.8L5 5L9.2 0.8" fill="none" stroke="#2666fb" stroke-width="1"/></svg>更多</div></div>
<div class="row s" style="top:768px"><div class="a" style="left:0;top:30px;width:60px;text-align:center">9</div><div class="a" style="left:73px;top:19px"><svg width="20" height="21" viewBox="0 0 20 21"><path d="M8.56 1.6L11.27 6.5L18.04 4.84L13.5 10.6L16 15.67L10.9 14L5.5 19.2L5.85 12.3L0.77 10.25L7 7.9Z" fill="none" stroke="#e4520f" stroke-width="1.75" stroke-linejoin="round"/></svg></div><div class="a nm" style="left:103px;top:18px">单表_全量读_全量写<span class="tag">数据接入采集</span></div><div class="a ds" style="left:72px;top:41.2px">【达梦 <span style="font-family:'WenQuanYi Zen Hei',sans-serif;position:relative;top:1.6px">→</span> 原始层】全量读取水位监测表，日全量…</div><div class="a" style="left:372px;top:14px">任务状态:</div><div class="sw on" style="left:437px;top:14px"><i></i></div><div class="a" style="left:372px;top:46px">调度状态:</div><div class="sw" style="left:437px;top:46px"><i></i></div><div class="a" style="left:502px;top:20px"><svg width="12" height="12" viewBox="0 0 12 12"><g fill="none" stroke="#74777d" stroke-width=".95"><circle cx="6" cy="6" r="5"/><path d="M6 3V6.3H8.8"/></g></svg></div><div class="a g" style="left:519px;top:16px">每小时, 限每月 1 号 执行</div><div class="a g" style="left:502px;top:44px">执行策略: 并行</div><div class="ok">成功</div><div class="a" style="left:702px;top:44px">2025-09-30 15:51</div><div class="a" style="left:862px;top:17.5px">吴同</div><div class="a" style="left:862px;top:41px">15365128327</div><div class="a" style="left:982px;top:17.5px">吴同</div><div class="a" style="left:982px;top:41px">15365128327</div><div class="op d" style="left:1108.5px;padding-left:17.5px"><svg width="12" height="12" viewBox="0 0 12 12" style="left:-0.4px"><g fill="none" stroke="#a3bffd" stroke-width="1" stroke-linejoin="round" stroke-linecap="round"><path d="M9.8 6.2V9.4Q9.8 10.6 8.6 10.6H2Q0.8 10.6 0.8 9.4V2.8Q0.8 1.6 2 1.6H5.2"/><path d="M4.8 6.8L9.6 1.6"/></g></svg>配置任务</div><div class="op" style="left:1200px;padding-left:18px"><svg width="13" height="10" viewBox="0 0 13 10" style="left:0;top:5px"><g fill="none" stroke="#2666fb" stroke-width="1"><path d="M0.6 5C2.8 0.6 10.2 0.6 12.4 5C10.2 9.4 2.8 9.4 0.6 5Z"/><circle cx="6.5" cy="5" r="2.5"/></g></svg>详情</div><div class="op" style="left:1264.4px;padding-left:17.5px"><svg width="10" height="6" viewBox="0 0 10 6" style="left:0;top:7px"><path d="M0.8 0.8L5 5L9.2 0.8" fill="none" stroke="#2666fb" stroke-width="1"/></svg>更多</div></div>
<div class="row" style="top:849px"><div class="a" style="left:0;top:30px;width:60px;text-align:center">8</div><div class="a" style="left:73px;top:19px"><svg width="20" height="21" viewBox="0 0 20 21"><path d="M8.56 1.6L11.27 6.5L18.04 4.84L13.5 10.6L16 15.67L10.9 14L5.5 19.2L5.85 12.3L0.77 10.25L7 7.9Z" fill="none" stroke="#e4520f" stroke-width="1.75" stroke-linejoin="round"/></svg></div><div class="a nm" style="left:103px;top:18px">多表_追加写<span class="tag">数据接入采集</span></div><div class="a ds" style="left:72px;top:41.2px">【达梦 <span style="font-family:'WenQuanYi Zen Hei',sans-serif;position:relative;top:1.6px">→</span> 应用层】结合测站信息和测站月统计报…</div><div class="a" style="left:372px;top:14px">任务状态:</div><div class="sw on" style="left:437px;top:14px"><i></i></div><div class="a" style="left:372px;top:46px">调度状态:</div><div class="sw" style="left:437px;top:46px"><i></i></div><div class="a" style="left:502px;top:20px"><svg width="12" height="12" viewBox="0 0 12 12"><g fill="none" stroke="#74777d" stroke-width=".95"><circle cx="6" cy="6" r="5"/><path d="M6 3V6.3H8.8"/></g></svg></div><div class="a g" style="left:519px;top:16px">在00:00, 限每月 1 号 …</div><div class="a g" style="left:502px;top:44px">执行策略: 并行</div><div class="ok">成功</div><div class="a" style="left:702px;top:44px">2025-09-30 15:48</div><div class="a" style="left:862px;top:17.5px">吴同</div><div class="a" style="left:862px;top:41px">15365128327</div><div class="a" style="left:982px;top:17.5px">吴同</div><div class="a" style="left:982px;top:41px">15365128327</div><div class="op d" style="left:1108.5px;padding-left:17.5px"><svg width="12" height="12" viewBox="0 0 12 12" style="left:-0.4px"><g fill="none" stroke="#a3bffd" stroke-width="1" stroke-linejoin="round" stroke-linecap="round"><path d="M9.8 6.2V9.4Q9.8 10.6 8.6 10.6H2Q0.8 10.6 0.8 9.4V2.8Q0.8 1.6 2 1.6H5.2"/><path d="M4.8 6.8L9.6 1.6"/></g></svg>配置任务</div><div class="op" style="left:1200px;padding-left:18px"><svg width="13" height="10" viewBox="0 0 13 10" style="left:0;top:5px"><g fill="none" stroke="#2666fb" stroke-width="1"><path d="M0.6 5C2.8 0.6 10.2 0.6 12.4 5C10.2 9.4 2.8 9.4 0.6 5Z"/><circle cx="6.5" cy="5" r="2.5"/></g></svg>详情</div><div class="op" style="left:1264.4px;padding-left:17.5px"><svg width="10" height="6" viewBox="0 0 10 6" style="left:0;top:7px"><path d="M0.8 0.8L5 5L9.2 0.8" fill="none" stroke="#2666fb" stroke-width="1"/></svg>更多</div></div>
<div class="row s" style="top:930px"><div class="a" style="left:0;top:30px;width:60px;text-align:center">7</div><div class="a" style="left:73px;top:19px"><svg width="20" height="21" viewBox="0 0 20 21"><path d="M8.56 1.6L11.27 6.5L18.04 4.84L13.5 10.6L16 15.67L10.9 14L5.5 19.2L5.85 12.3L0.77 10.25L7 7.9Z" fill="none" stroke="#e4520f" stroke-width="1.75" stroke-linejoin="round"/></svg></div><div class="a nm" style="left:103px;top:18px">多表_全量写<span class="tag">数据接入采集</span></div><div class="a ds" style="left:72px;top:41.2px">【达梦 <span style="font-family:'WenQuanYi Zen Hei',sans-serif;position:relative;top:1.6px">→</span> 应用层】结合测站信息和测站日统计报…</div><div class="a" style="left:372px;top:14px">任务状态:</div><div class="sw on" style="left:437px;top:14px"><i></i></div><div class="a" style="left:372px;top:46px">调度状态:</div><div class="sw" style="left:437px;top:46px"><i></i></div><div class="a" style="left:502px;top:20px"><svg width="12" height="12" viewBox="0 0 12 12"><g fill="none" stroke="#74777d" stroke-width=".95"><circle cx="6" cy="6" r="5"/><path d="M6 3V6.3H8.8"/></g></svg></div><div class="a g" style="left:519px;top:16px">在00:00, 限每月 1 号 …</div><div class="a g" style="left:502px;top:44px">执行策略: 并行</div><div class="ok">成功</div><div class="a" style="left:702px;top:44px">2025-09-30 15:45</div><div class="a" style="left:862px;top:17.5px">吴同</div><div class="a" style="left:862px;top:41px">15365128327</div><div class="a" style="left:982px;top:17.5px">吴同</div><div class="a" style="left:982px;top:41px">15365128327</div><div class="op d" style="left:1108.5px;padding-left:17.5px"><svg width="12" height="12" viewBox="0 0 12 12" style="left:-0.4px"><g fill="none" stroke="#a3bffd" stroke-width="1" stroke-linejoin="round" stroke-linecap="round"><path d="M9.8 6.2V9.4Q9.8 10.6 8.6 10.6H2Q0.8 10.6 0.8 9.4V2.8Q0.8 1.6 2 1.6H5.2"/><path d="M4.8 6.8L9.6 1.6"/></g></svg>配置任务</div><div class="op" style="left:1200px;padding-left:18px"><svg width="13" height="10" viewBox="0 0 13 10" style="left:0;top:5px"><g fill="none" stroke="#2666fb" stroke-width="1"><path d="M0.6 5C2.8 0.6 10.2 0.6 12.4 5C10.2 9.4 2.8 9.4 0.6 5Z"/><circle cx="6.5" cy="5" r="2.5"/></g></svg>详情</div><div class="op" style="left:1264.4px;padding-left:17.5px"><svg width="10" height="6" viewBox="0 0 10 6" style="left:0;top:7px"><path d="M0.8 0.8L5 5L9.2 0.8" fill="none" stroke="#2666fb" stroke-width="1"/></svg>更多</div></div>
<div id="fix"></div>
<div class="wm" style="left:504.1px;top:6.5px">qData</div><div class="wm" style="left:1007.1px;top:6.5px">qData</div><div class="wm" style="left:1507.1px;top:6.5px">qData</div><div class="wm" style="left:253.6px;top:125.4px">qData</div><div class="wm" style="left:754.6px;top:125.4px">qData</div><div class="wm" style="left:1256.6px;top:125.4px">qData</div><div class="wm" style="left:1758.6px;top:125.4px">qData</div><div class="wm" style="left:504.1px;top:243.7px">qData</div><div class="wm" style="left:1007.1px;top:243.7px">qData</div><div class="wm" style="left:1507.1px;top:243.7px">qData</div><div class="wm" style="left:253.6px;top:362.6px">qData</div><div class="wm" style="left:754.6px;top:362.6px">qData</div><div class="wm" style="left:1256.6px;top:362.6px">qData</div><div class="wm" style="left:1758.6px;top:362.6px">qData</div><div class="wm" style="left:504.1px;top:480.9px">qData</div><div class="wm" style="left:1007.1px;top:480.9px">qData</div><div class="wm" style="left:1507.1px;top:480.9px">qData</div><div class="wm" style="left:253.6px;top:599.8px">qData</div><div class="wm" style="left:754.6px;top:599.8px">qData</div><div class="wm" style="left:1256.6px;top:599.8px">qData</div><div class="wm" style="left:1758.6px;top:599.8px">qData</div><div class="wm" style="left:504.1px;top:718.1px">qData</div><div class="wm" style="left:1007.1px;top:718.1px">qData</div><div class="wm" style="left:1507.1px;top:718.1px">qData</div><div class="wm" style="left:253.6px;top:837.0px">qData</div><div class="wm" style="left:754.6px;top:837.0px">qData</div><div class="wm" style="left:1256.6px;top:837.0px">qData</div><div class="wm" style="left:1758.6px;top:837.0px">qData</div>
</body>
</html>
